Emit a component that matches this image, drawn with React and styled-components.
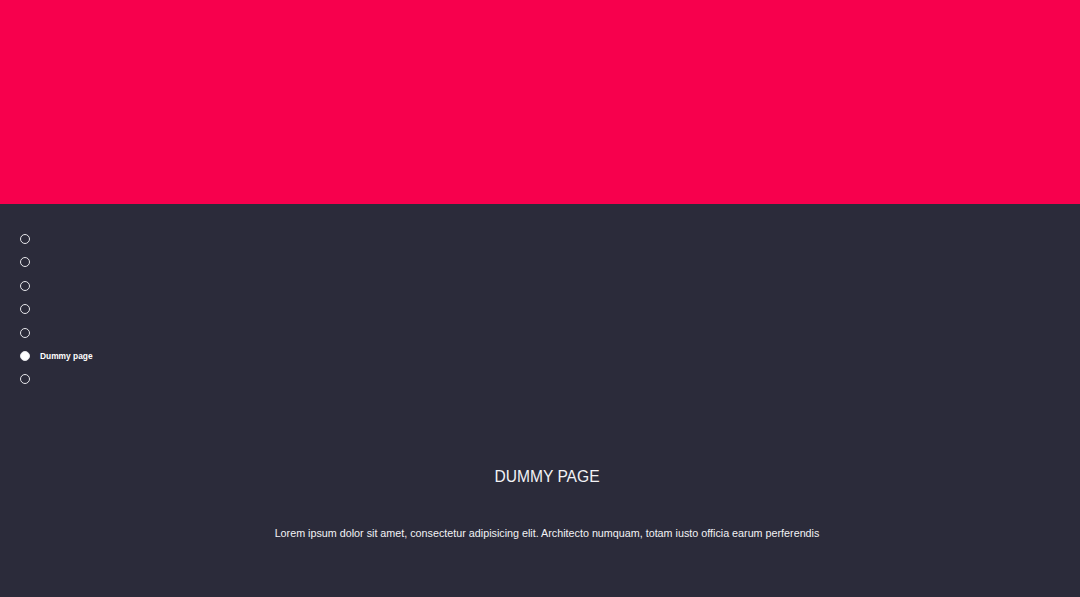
import React from 'react';
import styled, { createGlobalStyle } from 'styled-components';

const Global = createGlobalStyle`
  html, body {
    margin: 0;
    padding: 0;
    background: #2b2b3a;
    font-family: "Liberation Sans", Arial, sans-serif;
  }
`;

const Page = styled.div`
  min-height: 597px;
  background: #2b2b3a;
  display: flex;
  flex-direction: column;
`;

const Banner = styled.header`
  height: 204px;
  background: #f7004d;
`;

const Nav = styled.ul`
  list-style: none;
  margin: 0;
  padding: 30px 0 0 20px;
  display: flex;
  flex-direction: column;
  gap: 13.4px;
`;

const NavItem = styled.li`
  display: flex;
  align-items: center;
  gap: 10px;
  height: 10px;
`;

const Dot = styled.span`
  box-sizing: border-box;
  width: 10px;
  height: 10px;
  border-radius: 50%;
  border: 1px solid #e6e6ea;
  background: ${(props) => (props.active ? '#ffffff' : 'transparent')};
`;

const Label = styled.span`
  color: #ffffff;
  font-size: 8.4px;
  font-weight: 700;
`;

const Content = styled.main`
  display: flex;
  flex-direction: column;
  align-items: center;
  padding: 83px 0 0 14px;
`;

const Title = styled.h1`
  margin: 0;
  color: #f2f2f5;
  font-size: 15.6px;
  font-weight: 400;
  line-height: 20px;
`;

const Text = styled.p`
  margin: 39px 0 0;
  color: #f2f2f5;
  font-size: 10.75px;
  line-height: 14px;
`;

const sections = ['', '', '', '', '', 'Dummy page', ''];

const App = () => (
  <Page>
    <Global />
    <Banner />
    <Nav>
      {sections.map((name, i) => (
        <NavItem key={i}>
          <Dot active={i === 5} />
          {name && <Label>{name}</Label>}
        </NavItem>
      ))}
    </Nav>
    <Content>
      <Title>DUMMY PAGE</Title>
      <Text>
        Lorem ipsum dolor sit amet, consectetur adipisicing elit. Architecto numquam, totam iusto officia earum perferendis
      </Text>
    </Content>
  </Page>
);

export default App;
